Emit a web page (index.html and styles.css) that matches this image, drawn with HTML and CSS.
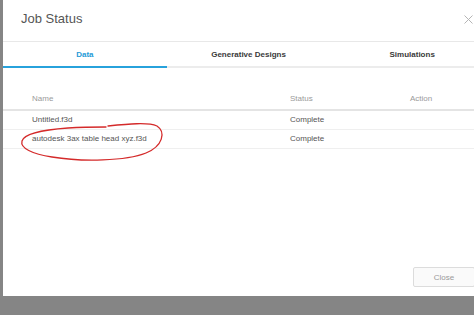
FILE: index.html
```html
<!DOCTYPE html>
<html>
<head>
<meta charset="utf-8">
<link rel="stylesheet" href="styles.css">
</head>
<body>
<div class="modal">
  <div class="header">
    <div class="title">Job Status</div>
    <svg class="close-x" width="9" height="9" viewBox="0 0 9 9"><path d="M0.5 0.5 L8.5 8.5 M8.5 0.5 L0.5 8.5" stroke="#b5b5b5" stroke-width="1" fill="none"/></svg>
  </div>
  <div class="tabs">
    <div class="tab active">Data</div>
    <div class="tab">Generative Designs</div>
    <div class="tab">Simulations</div>
  </div>
  <div class="table">
    <div class="row head">
      <div class="c-name">Name</div>
      <div class="c-status">Status</div>
      <div class="c-action">Action</div>
    </div>
    <div class="row">
      <div class="c-name">Untitled.f3d</div>
      <div class="c-status">Complete</div>
      <div class="c-action"></div>
    </div>
    <div class="row">
      <div class="c-name">autodesk 3ax table head xyz.f3d</div>
      <div class="c-status">Complete</div>
      <div class="c-action"></div>
    </div>
  </div>
  <div class="footer">
    <button class="btn">Close</button>
  </div>
</div>
<svg class="annot" width="474" height="315" viewBox="0 0 474 315">
  <path d="M108 126 C128 124 148 122 157 126 C166 132 163 146 146 153 C126 161 82 162 52 157 C32 154 20 148 22 141 C24 134 40 130 68 128 C84 127 96 127 106 127" fill="none" stroke="#d42a2a" stroke-width="1.3" stroke-linecap="round"/>
</svg>
</body>
</html>
```
FILE: styles.css
```css
html, body {
  margin: 0;
  padding: 0;
}
body {
  background: #858585;
  width: 474px;
  height: 315px;
  overflow: hidden;
  position: relative;
  font-family: "Liberation Sans", Arial, sans-serif;
}
.modal {
  margin-left: 3px;
  width: 491px;
  height: 296px;
  background: #fff;
  display: flex;
  flex-direction: column;
}
.header {
  height: 42px;
  box-sizing: border-box;
  border-bottom: 1px solid #e8e8e8;
  display: flex;
  align-items: flex-start;
  justify-content: space-between;
  padding: 11px 21px 0 18px;
}
.title {
  font-size: 13px;
  line-height: 16px;
  color: #555;
}
.close-x {
  margin-top: 4px;
}
.tabs {
  display: flex;
  border-bottom: 2px solid #ececec;
  height: 26px;
  box-sizing: border-box;
}
.tab {
  flex: 1;
  text-align: center;
  font-size: 8px;
  font-weight: bold;
  color: #3a3a3a;
  line-height: 26px;
  margin-bottom: -2px;
  border-bottom: 2px solid transparent;
}
.tab.active {
  color: #1f9bd7;
  border-bottom-color: #27a2dc;
}
.table {
  margin-top: 22px;
}
.row {
  display: flex;
  height: 19px;
  box-sizing: border-box;
  border-bottom: 1px solid #efefef;
  font-size: 8px;
  line-height: 18px;
  color: #555;
}
.row.head {
  height: 21px;
  line-height: 18px;
  color: #9a9a9a;
  border-bottom: 2px solid #e4e4e4;
}
.c-name {
  padding-left: 29px;
  width: 258px;
}
.c-status {
  width: 120px;
}
.footer {
  margin-top: auto;
  display: flex;
  justify-content: flex-end;
  padding: 0 19px 9px 0;
}
.btn {
  width: 62px;
  height: 20px;
  background: #fafafa;
  border: 1px solid #dcdcdc;
  border-radius: 2px;
  font-family: "Liberation Sans", Arial, sans-serif;
  font-size: 8px;
  color: #999;
  padding: 0;
}
.annot {
  position: absolute;
  left: 0;
  top: 0;
  pointer-events: none;
}
```
